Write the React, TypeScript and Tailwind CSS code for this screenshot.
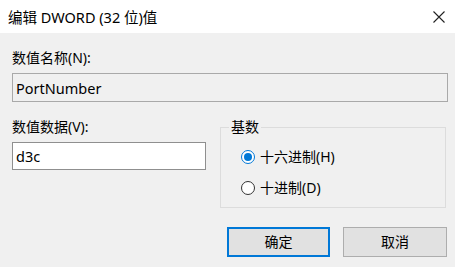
import React, { useState } from "react";

function Radio({ checked, label, onClick }: { checked: boolean; label: string; onClick: () => void }) {
  return (
    <div className="flex h-[20px] items-center cursor-default" onClick={onClick}>
      <span
        className={`flex h-[14px] w-[14px] items-center justify-center rounded-full border bg-white ${
          checked ? "border-[#0078d7]" : "border-[#333333]"
        }`}
      >
        {checked && <span className="h-[8px] w-[8px] rounded-full bg-[#0078d7]" />}
      </span>
      <span className="ml-[5px]">{label}</span>
    </div>
  );
}

export default function App() {
  const [value, setValue] = useState("d3c");
  const [hex, setHex] = useState(true);

  return (
    <div className="flex h-[267px] w-[455px] flex-col overflow-hidden bg-[#f0f0f0] font-['Noto_Sans','Noto_Sans_CJK_SC',sans-serif] text-[14px] leading-[20px] text-black">
      {/* title bar */}
      <div className="flex h-[33px] shrink-0 items-center justify-between bg-white pl-[8px] pr-[8px]">
        <span className="text-[14.5px]">编辑 DWORD (32 位)值</span>
        <svg width="12" height="12" viewBox="0 0 12 12" className="mr-[2px]">
          <path d="M0.5 0.5 L11.5 11.5 M11.5 0.5 L0.5 11.5" stroke="#222" strokeWidth="1.1" fill="none" />
        </svg>
      </div>

      <div className="flex flex-col pl-[12px] pr-[7px] pt-[15px]">
        <div>数值名称(N):</div>
        <div className="mt-[5px] flex h-[29px] items-center border border-[#a9a9a9] bg-[#f0f0f0] pl-[3px] text-[14.5px]">
          PortNumber
        </div>

        <div className="mt-[15px] flex">
          <div className="flex w-[194px] flex-col">
            <div>数值数据(V):</div>
            <input
              value={value}
              onChange={(e) => setValue(e.target.value)}
              className="mt-[5px] h-[28px] border border-[#8f8f8f] bg-white pl-[3px] text-[14.5px] outline-none"
            />
          </div>

          <fieldset className="ml-[14px] h-[91px] w-[226px] border border-[#dcdcdc] pl-[20px]">
            <legend className="-ml-[12px] px-[2px]">基数</legend>
            <div className="mt-[10px]">
              <Radio checked={hex} label="十六进制(H)" onClick={() => setHex(true)} />
            </div>
            <div className="mt-[11px]">
              <Radio checked={!hex} label="十进制(D)" onClick={() => setHex(false)} />
            </div>
          </fieldset>
        </div>

        <div className="mt-[19px] flex justify-end gap-[13px] pr-[1px]">
          <button className="h-[30px] w-[103px] border-2 border-[#0078d7] bg-[#e1e1e1]">确定</button>
          <button className="h-[30px] w-[104px] border border-[#adadad] bg-[#e1e1e1]">取消</button>
        </div>
      </div>
    </div>
  );
}
